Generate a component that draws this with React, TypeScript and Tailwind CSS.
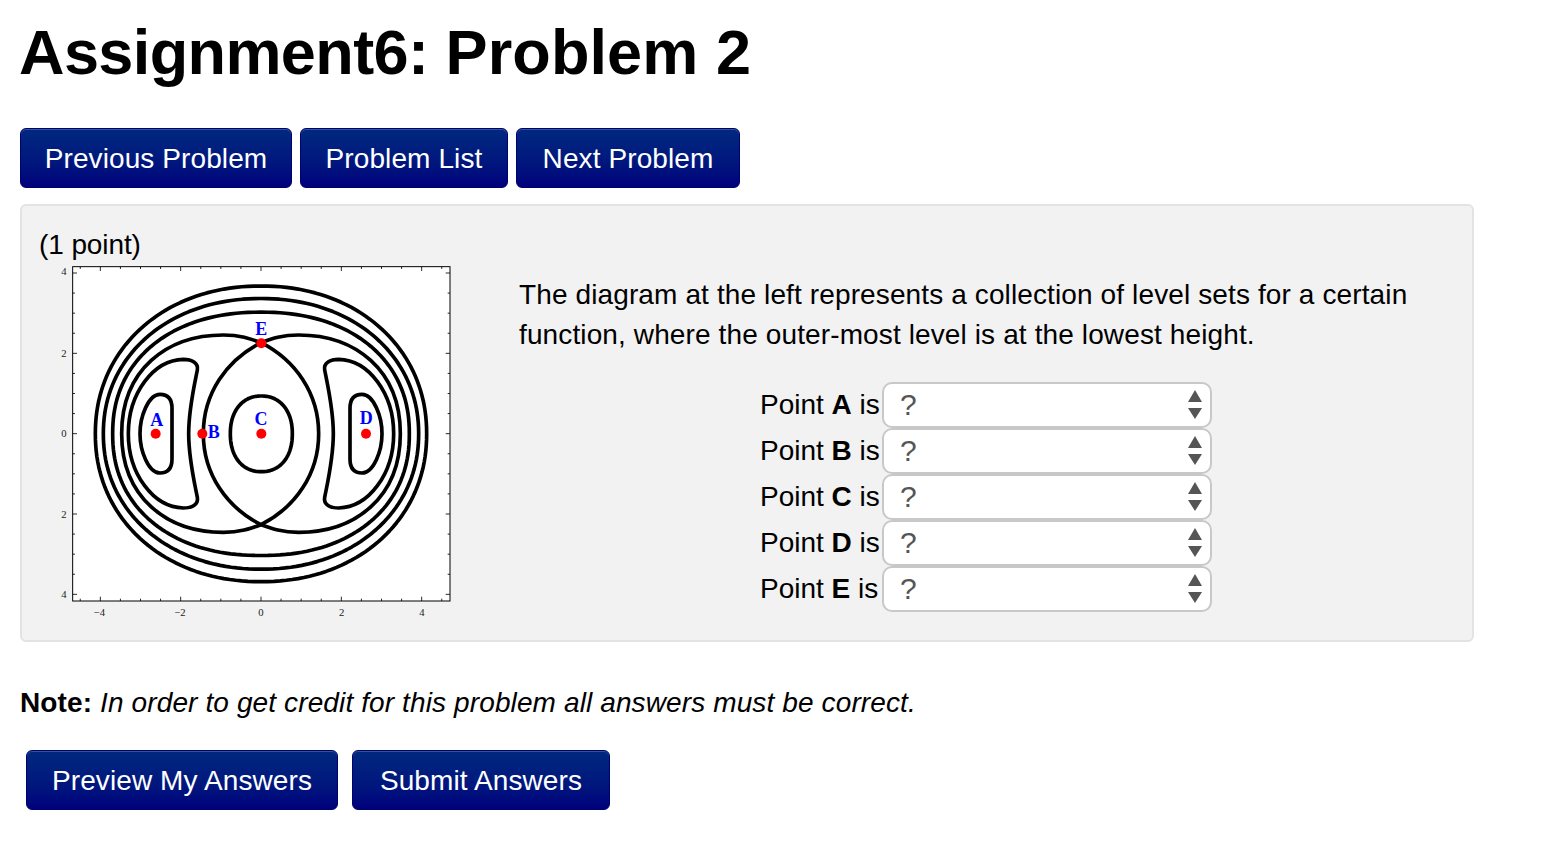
const FONT = "font-['Liberation_Sans',Arial,sans-serif]";

function superEllipse(cx: number, cy: number, rx: number, ry: number, n: number): string {
  const pts: string[] = [];
  for (let i = 0; i < 180; i++) {
    const a = (i / 180) * Math.PI * 2;
    const c = Math.cos(a);
    const s = Math.sin(a);
    const x = cx + rx * Math.sign(c) * Math.pow(Math.abs(c), 2 / n);
    const y = cy + ry * Math.sign(s) * Math.pow(Math.abs(s), 2 / n);
    pts.push(`${x.toFixed(1)} ${y.toFixed(1)}`);
  }
  return `M${pts.join(" L")} Z`;
}

const SADDLE =
  "M603 248 C570 236 540 225 490 225 C320 225 185 330 185 521 C185 712 320 817 490 817 C540 817 570 806 603 794 C706 742 776 642 776 521 C776 400 706 300 603 248 Z";
const BIG_LOBE =
  "M386 521 C386 450 400 390 412 330 C416 308 395 298 370 298 C280 300 205 400 205 521 C205 642 280 742 370 744 C395 744 416 734 412 712 C400 652 386 592 386 521 Z";
const SMALL_LOBE =
  "M336 521 L336 445 C336 415 322 403 300 403 C265 403 240 470 240 521 C240 572 265 639 300 639 C322 639 336 627 336 597 Z";

function Contours() {
  const ticks: number[] = [];
  for (let i = -9; i <= 9; i++) ticks.push(i * 0.5);
  const X = (v: number) => 603 + v * 120.5;
  const Y = (v: number) => 521 - v * 120.5;
  return (
    <svg viewBox="0 0 1200 1080" className="block h-[360px] w-[400px]">
      <rect x="38" y="20" width="1132" height="1003" fill="#fff" stroke="#000" strokeWidth="3" />
      {ticks.map((t) => {
        const len = Number.isInteger(t / 2) ? 13 : 7;
        return (
          <g key={t} stroke="#000" strokeWidth="2.5">
            <line x1={X(t)} x2={X(t)} y1={1023} y2={1023 - len} />
            <line x1={X(t)} x2={X(t)} y1={20} y2={20 + len} />
            {Math.abs(t) <= 4 && <line x1={38} x2={38 + len} y1={Y(t)} y2={Y(t)} />}
            {Math.abs(t) <= 4 && <line x1={1170} x2={1170 - len} y1={Y(t)} y2={Y(t)} />}
          </g>
        );
      })}
      <g fill="none" stroke="#000" strokeWidth="11" strokeLinejoin="round">
        <path d={superEllipse(603, 521.5, 497, 443.5, 2.1)} />
        <path d={superEllipse(603, 521.5, 473, 406, 2.1)} />
        <path d={superEllipse(603, 521.5, 445, 365, 2.2)} />
        <path d={SADDLE} />
        <path d={SADDLE} transform="matrix(-1 0 0 1 1206 0)" />
        <path d={superEllipse(604, 521.5, 93, 113.5, 2.2)} />
        <path d={BIG_LOBE} />
        <path d={SMALL_LOBE} />
        <g transform="matrix(-1 0 0 1 1206 0)">
          <path d={BIG_LOBE} />
          <path d={SMALL_LOBE} />
        </g>
      </g>
      <g fill="#ff0000">
        <circle cx="287" cy="521" r="15" />
        <circle cx="427" cy="521" r="15" />
        <circle cx="604" cy="521" r="15" />
        <circle cx="918" cy="521" r="15" />
        <circle cx="604" cy="250" r="15" />
      </g>
      <g fill="#0000ff" fontFamily="'Liberation Serif',serif" fontWeight="700" fontSize="54" textAnchor="middle">
        <text x="290" y="497">A</text>
        <text x="461" y="534">B</text>
        <text x="603" y="496">C</text>
        <text x="919" y="491">D</text>
        <text x="604" y="226">E</text>
      </g>
      <g fill="#222" fontFamily="'Liberation Serif',serif" fontSize="32" textAnchor="middle">
        <text x="118" y="1067">−4</text>
        <text x="360" y="1067">−2</text>
        <text x="603" y="1067">0</text>
        <text x="845" y="1067">2</text>
        <text x="1086" y="1067">4</text>
        <text x="12" y="44">4</text>
        <text x="12" y="290">2</text>
        <text x="12" y="531">0</text>
        <text x="12" y="773">2</text>
        <text x="12" y="1015">4</text>
      </g>
    </svg>
  );
}

function NavButton({ label, className }: { label: string; className: string }) {
  return (
    <button
      className={`h-[60px] rounded-[6px] border border-[#00006e] bg-gradient-to-b from-[#00287f] to-[#00007c] pt-[2px] text-[28px] leading-[36px] tracking-[0.1px] text-white shadow-[inset_0_1px_0_rgba(255,255,255,0.2)] ${className}`}
    >
      {label}
    </button>
  );
}

function PointRow({ letter }: { letter: string }) {
  return (
    <div className="flex h-[46px] items-center">
      <span className="w-[122px] whitespace-nowrap tracking-normal">
        Point <b>{letter}</b> is
      </span>
      <div className="relative h-[46px] w-[330px]">
        <select className="h-full w-full appearance-none rounded-[10px] border-2 border-[#c8c8c8] bg-white pl-[16px] text-[30px] text-[#555]">
          <option>?</option>
        </select>
        <svg viewBox="0 0 14 32" className="absolute right-[10px] top-[7px] h-[32px] w-[14px]">
          <path d="M7 1 L14 13 H0 Z M0 19 H14 L7 30 Z" fill="#555" />
        </svg>
      </div>
    </div>
  );
}

export default function App() {
  return (
    <div className={`${FONT} min-h-[844px] bg-white px-[20px] text-[28px] leading-[40px] tracking-[0.12px] text-black`}>
      <h1 className="-ml-[1px] pt-[18px] text-[63px] font-bold leading-[68px] tracking-[-0.3px]">
        <span className="tracking-[-0.6px]">Assignment6:</span> <span className="tracking-[0.1px]">Problem 2</span>
      </h1>
      <nav className="mt-[42px] flex gap-[8px]">
        <NavButton label="Previous Problem" className="w-[272px]" />
        <NavButton label="Problem List" className="w-[208px]" />
        <NavButton label="Next Problem" className="w-[224px]" />
      </nav>
      <section className="mt-[16px] h-[438px] w-[1454px] rounded-[6px] border-2 border-[#e3e3e3] bg-[#f2f2f2] pl-[17px] pt-[19px]">
        <div className="tracking-[-0.1px]">(1 point)</div>
        <div className="flex">
          <div className="-mt-[5px] ml-[21px] w-[459px] shrink-0">
            <Contours />
          </div>
          <div className="w-[934px] pt-[10px]">
            <p>
              The diagram at the left represents a collection of level sets for a certain function, where the
              outer-most level is at the lowest height.
            </p>
            <div className="mt-[27px] flex flex-col items-center">
              {["A", "B", "C", "D", "E"].map((l) => (
                <PointRow key={l} letter={l} />
              ))}
            </div>
          </div>
        </div>
      </section>
      <p className="mt-[41px]">
        <b>Note:</b> <i>In order to get credit for this problem all answers must be correct.</i>
      </p>
      <div className="mt-[27px] flex gap-[14px] pl-[6px]">
        <NavButton label="Preview My Answers" className="w-[312px]" />
        <NavButton label="Submit Answers" className="w-[258px]" />
      </div>
    </div>
  );
}
